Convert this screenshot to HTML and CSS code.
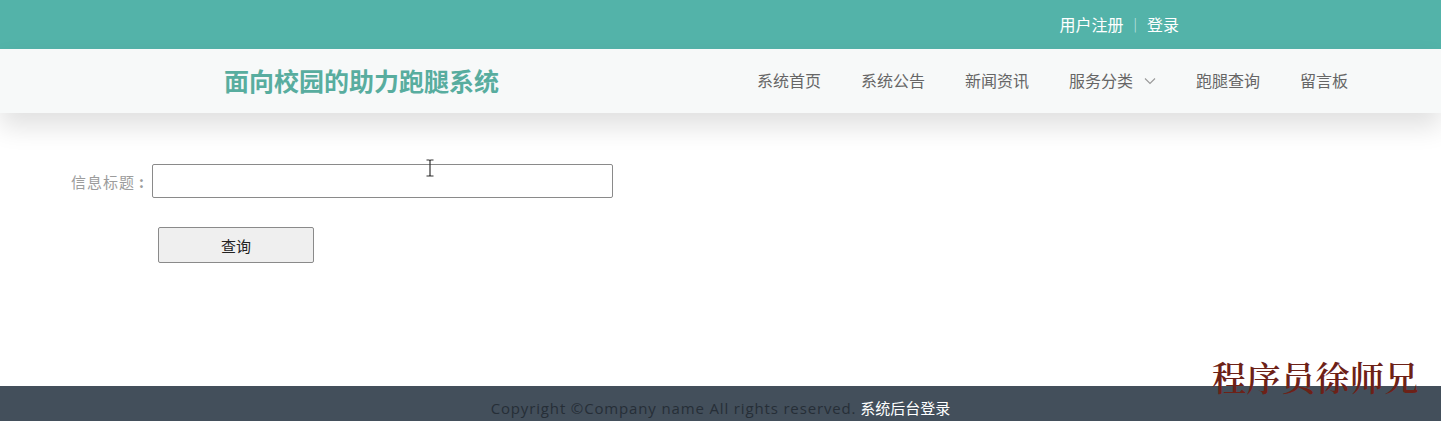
FILE: index.html
```html
<!DOCTYPE html>
<html lang="zh-CN">
<head>
<meta charset="utf-8">
<title>面向校园的助力跑腿系统</title>
<link rel="stylesheet" href="styles.css">
</head>
<body>
<div class="topbar">
  <div class="toplinks">
    <a href="#" class="tl">用户注册</a>
    <span class="sep">|</span>
    <a href="#" class="tl">登录</a>
  </div>
</div>
<header class="header">
  <div class="brand">面向校园的助力跑腿系统</div>
  <nav class="nav">
    <a href="#" class="nav-item">系统首页</a>
    <a href="#" class="nav-item">系统公告</a>
    <a href="#" class="nav-item">新闻资讯</a>
    <a href="#" class="nav-item">服务分类<svg class="caret" width="12" height="8" viewBox="0 0 12 8"><path d="M1 1.5 L6 6.5 L11 1.5" fill="none" stroke="#999" stroke-width="1.1"/></svg></a>
    <a href="#" class="nav-item">跑腿查询</a>
    <a href="#" class="nav-item">留言板</a>
  </nav>
</header>
<main class="main">
  <form class="search">
    <div class="row">
      <label class="label">信息标题<span class="colon">:</span></label>
      <input class="field" type="text">
    </div>
    <div class="row btnrow">
      <button type="button" class="btn">查询</button>
    </div>
  </form>
  <svg class="cursor" width="10" height="18" viewBox="0 0 10 18"><path d="M1.5 1 H4 Q5 1 5 2 Q5 1 6 1 H8.5 M5 2 V16 M1.5 17 H4 Q5 17 5 16 Q5 17 6 17 H8.5" fill="none" stroke="#333" stroke-width="1.2"/></svg>
</main>
<footer class="footer">
  <span class="copy">Copyright ©Company name All rights reserved.</span>
  <a href="#" class="admin">系统后台登录</a>
</footer>
<div class="watermark">程序员徐师兄</div>
</body>
</html>
```
FILE: styles.css
```css
* { box-sizing: border-box; }
html, body { margin: 0; padding: 0; }
body {
  font-family: "Noto Sans CJK SC", "Liberation Sans", sans-serif;
  background: #fff;
  position: relative;
  height: 421px;
  overflow: hidden;
}
a { text-decoration: none; }

.topbar {
  height: 49px;
  background: #53b3a9;
  display: flex;
  align-items: center;
  justify-content: flex-end;
  padding-right: 262px;
  padding-bottom: 2px;
}
.toplinks {
  display: flex;
  align-items: center;
  gap: 10px;
  font-size: 16px;
  line-height: 20px;
}
.tl { color: #fff; }
.sep { color: rgba(255,255,255,0.55); font-size: 13px; }

.header {
  position: relative;
  z-index: 2;
  height: 64px;
  background: #f7f9f9;
  display: flex;
  align-items: center;
  justify-content: space-between;
  padding: 0 93px 0 224px;
  box-shadow: 0 14px 26px rgba(0,0,0,0.12);
}
.brand {
  font-size: 25px;
  font-weight: bold;
  color: #58ad9f;
  line-height: 30px;
  margin-top: -3px;
}
.nav {
  display: flex;
  align-items: center;
  gap: 40px;
}
.nav-item {
  font-size: 16px;
  color: #666;
  display: flex;
  align-items: center;
  gap: 11px;
  line-height: 22px;
  margin-top: -2px;
}
.caret { display: block; margin-top: 1px; }

.main {
  height: 273px;
  position: relative;
  padding-top: 51px;
}
.search { display: flex; flex-direction: column; }
.row {
  display: flex;
  align-items: center;
}
.label {
  width: 152px;
  padding-right: 8px;
  text-align: right;
  font-size: 15px;
  letter-spacing: 1px;
  color: #9c9c9c;
}
.colon { margin-left: 4px; font-weight: bold; letter-spacing: 0; }
.field {
  width: 461px;
  height: 34px;
  border: 1px solid #8a8a8a;
  border-radius: 2px;
  background: #fff;
  margin: 0;
  padding: 0 4px;
}
.btnrow { padding-left: 158px; margin-top: 29px; }
.btn {
  width: 156px;
  height: 36px;
  background: #efefef;
  border: 1px solid #8a8a8a;
  border-radius: 2px;
  font-family: "Noto Sans CJK SC", sans-serif;
  font-size: 15px;
  color: #222;
  padding: 0;
}
.cursor {
  position: absolute;
  left: 425px;
  top: 46px;
}

.footer {
  height: 35px;
  background: #434f5b;
  display: flex;
  align-items: center;
  justify-content: center;
  padding-top: 8px;
}
.copy {
  font-family: "Open Sans", "Liberation Sans", sans-serif;
  color: #262e37;
  font-size: 15px;
  letter-spacing: 0.85px;
}
.admin { color: #fff; margin-left: 4px; font-size: 15px; }

.watermark {
  position: absolute;
  left: 1212px;
  top: 355px;
  font-family: "Noto Serif CJK SC", "Noto Sans CJK SC", serif;
  font-size: 34px;
  font-weight: 600;
  line-height: 44px;
  color: #6d2117;
  letter-spacing: 0.5px;
}
```
